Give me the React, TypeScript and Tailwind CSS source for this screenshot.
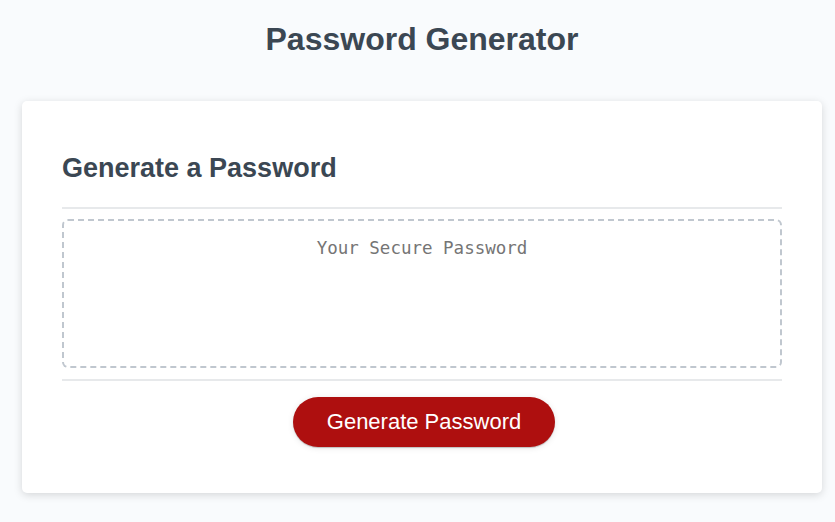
export default function App() {
  return (
    <div className="min-h-screen bg-[#f9fbfd] font-['Liberation_Sans',Arial,sans-serif] text-[#3b4753]">
      <div className="ml-[22px] w-[800px] pt-[21px]">
        <h1 className="text-center text-[32px] font-bold leading-[37px]">Password Generator</h1>

        <div className="mt-[43px] rounded-[5px] bg-white px-10 pt-[30px] pb-[30px] shadow-[0_2px_8px_rgba(0,0,0,0.15)]">
          <h2 className="mt-[22px] mb-[23px] text-[27px] font-bold leading-[31px]">Generate a Password</h2>
          <div className="h-[2px] bg-[#e7e9eb]" />

          <textarea
            readOnly
            placeholder="Your Secure Password"
            className="mt-[10px] block h-[149px] w-full resize-none overflow-hidden rounded-[6px] border-2 border-dashed border-[#c0c7cf] px-[18px] pt-[17px] text-center font-['DejaVu_Sans_Mono',monospace] text-[17.5px] leading-[21px] outline-none placeholder:text-[#757575]"
          />

          <div className="mt-[11px] h-[2px] bg-[#e7e9eb]" />

          <div className="flex justify-center pl-[4px]">
            <button
              type="button"
              className="my-[16px] rounded-full bg-[#ae0f0f] px-[34px] py-[14px] text-[22px] leading-[22px] text-white shadow-[0_1px_6px_rgba(0,0,0,0.1),0_1px_1px_rgba(0,0,0,0.2)]"
            >
              Generate Password
            </button>
          </div>
        </div>
      </div>
    </div>
  );
}
